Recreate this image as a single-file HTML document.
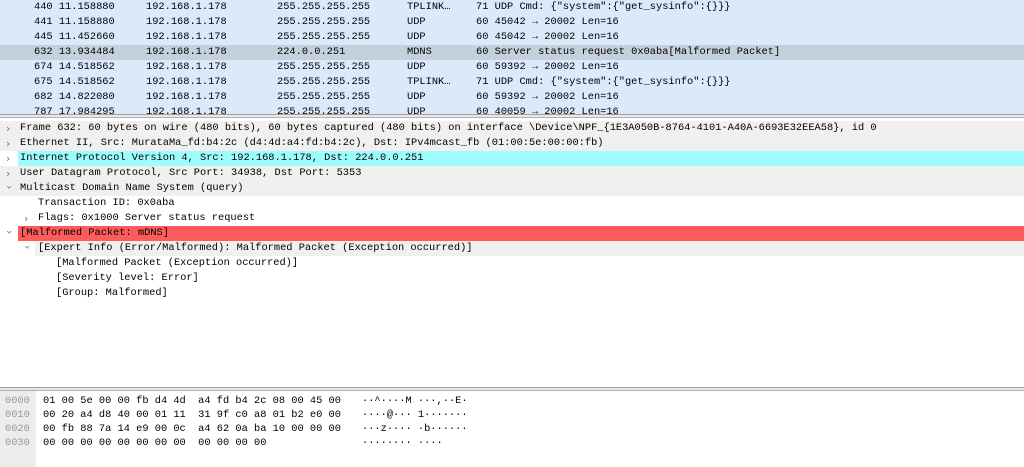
<!DOCTYPE html>
<html><head><meta charset="utf-8"><style>
*{margin:0;padding:0;box-sizing:border-box}
body{width:1024px;height:467px;overflow:hidden;background:#fff;font-family:"Liberation Mono","DejaVu Sans Mono",monospace;font-size:10.35px;color:#000;position:relative}
.r{position:absolute;left:0;width:1024px;height:15px;line-height:15px;white-space:pre}
.r span{position:absolute;top:0}
.pl{background:#daeafb}
.sel{background:#c4d0db}
.g{background:#f0f0f0}
.t{position:absolute;white-space:pre;line-height:15px}
.a{position:absolute;color:#777;font-size:11px;font-family:"DejaVu Sans",sans-serif}
</style></head><body>
<div style="position:absolute;top:0;left:0;width:1024px;height:114px;background:#daeafb;overflow:hidden">
<div class="r pl" style="top:0"><span style="left:34px">440 11.158880</span><span style="left:146px">192.168.1.178</span><span style="left:277px">255.255.255.255</span><span style="left:407px">TPLINK…</span><span style="left:476px">71 UDP Cmd: {"system":{"get_sysinfo":{}}}</span></div>
<div class="r pl" style="top:15px"><span style="left:34px">441 11.158880</span><span style="left:146px">192.168.1.178</span><span style="left:277px">255.255.255.255</span><span style="left:407px">UDP</span><span style="left:476px">60 45042 → 20002 Len=16</span></div>
<div class="r pl" style="top:30px"><span style="left:34px">445 11.452660</span><span style="left:146px">192.168.1.178</span><span style="left:277px">255.255.255.255</span><span style="left:407px">UDP</span><span style="left:476px">60 45042 → 20002 Len=16</span></div>
<div class="r sel" style="top:45px"><span style="left:34px">632 13.934484</span><span style="left:146px">192.168.1.178</span><span style="left:277px">224.0.0.251</span><span style="left:407px">MDNS</span><span style="left:476px">60 Server status request 0x0aba[Malformed Packet]</span></div>
<div class="r pl" style="top:60px"><span style="left:34px">674 14.518562</span><span style="left:146px">192.168.1.178</span><span style="left:277px">255.255.255.255</span><span style="left:407px">UDP</span><span style="left:476px">60 59392 → 20002 Len=16</span></div>
<div class="r pl" style="top:75px"><span style="left:34px">675 14.518562</span><span style="left:146px">192.168.1.178</span><span style="left:277px">255.255.255.255</span><span style="left:407px">TPLINK…</span><span style="left:476px">71 UDP Cmd: {"system":{"get_sysinfo":{}}}</span></div>
<div class="r pl" style="top:90px"><span style="left:34px">682 14.822080</span><span style="left:146px">192.168.1.178</span><span style="left:277px">255.255.255.255</span><span style="left:407px">UDP</span><span style="left:476px">60 59392 → 20002 Len=16</span></div>
<div class="r pl" style="top:105px"><span style="left:34px">787 17.984295</span><span style="left:146px">192.168.1.178</span><span style="left:277px">255.255.255.255</span><span style="left:407px">UDP</span><span style="left:476px">60 40059 → 20002 Len=16</span></div>
</div>
<div style="position:absolute;top:114px;left:0;width:1024px;height:1px;background:#a0a0a0"></div>
<div style="position:absolute;top:115px;left:0;width:1024px;height:2px;background:#e8e8e8"></div>
<div style="position:absolute;top:117px;left:0;width:1024px;height:1px;background:#b0b0b0"></div>

<div class="r g" style="top:121px"></div>
<div class="r g" style="top:136px"></div>
<div class="r" style="top:151px;left:18px;width:1006px;background:#9ffcfe"></div>
<div class="r g" style="top:166px"></div>
<div class="r g" style="top:181px"></div>
<div class="r" style="top:226px;left:18px;width:1006px;background:#fe5c5c"></div>
<div class="r g" style="top:241px;left:35px;width:989px"></div>

<div class="a" style="left:6px;top:121px;line-height:15px">›</div>
<div class="a" style="left:6px;top:136px;line-height:15px">›</div>
<div class="a" style="left:6px;top:151px;line-height:15px">›</div>
<div class="a" style="left:6px;top:166px;line-height:15px">›</div>
<div class="a" style="left:5px;top:181px;line-height:15px;transform:rotate(90deg);transform-origin:4px 8px">›</div>
<div class="a" style="left:24px;top:211px;line-height:15px">›</div>
<div class="a" style="left:5px;top:226px;line-height:15px;transform:rotate(90deg);transform-origin:4px 8px">›</div>
<div class="a" style="left:23px;top:241px;line-height:15px;transform:rotate(90deg);transform-origin:4px 8px">›</div>

<div class="t" style="left:20px;top:121px">Frame 632: 60 bytes on wire (480 bits), 60 bytes captured (480 bits) on interface \Device\NPF_{1E3A050B-8764-4101-A40A-6693E32EEA58}, id 0</div>
<div class="t" style="left:20px;top:136px">Ethernet II, Src: MurataMa_fd:b4:2c (d4:4d:a4:fd:b4:2c), Dst: IPv4mcast_fb (01:00:5e:00:00:fb)</div>
<div class="t" style="left:20px;top:151px">Internet Protocol Version 4, Src: 192.168.1.178, Dst: 224.0.0.251</div>
<div class="t" style="left:20px;top:166px">User Datagram Protocol, Src Port: 34938, Dst Port: 5353</div>
<div class="t" style="left:20px;top:181px">Multicast Domain Name System (query)</div>
<div class="t" style="left:38px;top:196px">Transaction ID: 0x0aba</div>
<div class="t" style="left:38px;top:211px">Flags: 0x1000 Server status request</div>
<div class="t" style="left:20px;top:226px">[Malformed Packet: mDNS]</div>
<div class="t" style="left:38px;top:241px">[Expert Info (Error/Malformed): Malformed Packet (Exception occurred)]</div>
<div class="t" style="left:56px;top:256px">[Malformed Packet (Exception occurred)]</div>
<div class="t" style="left:56px;top:271px">[Severity level: Error]</div>
<div class="t" style="left:56px;top:286px">[Group: Malformed]</div>

<div style="position:absolute;top:387px;left:0;width:1024px;height:1px;background:#a0a0a0"></div>
<div style="position:absolute;top:388px;left:0;width:1024px;height:2px;background:#e8e8e8"></div>
<div style="position:absolute;top:390px;left:0;width:1024px;height:1px;background:#b0b0b0"></div>
<div style="position:absolute;top:391px;left:0;width:36px;height:76px;background:#ececec"></div>
<div class="t" style="left:5px;top:394px;line-height:14px;color:#999">0000
0010
0020
0030</div>
<div class="t" style="left:43px;top:394px;line-height:14px">01 00 5e 00 00 fb d4 4d  a4 fd b4 2c 08 00 45 00
00 20 a4 d8 40 00 01 11  31 9f c0 a8 01 b2 e0 00
00 fb 88 7a 14 e9 00 0c  a4 62 0a ba 10 00 00 00
00 00 00 00 00 00 00 00  00 00 00 00</div>
<div class="t" style="left:362px;top:394px;line-height:14px">··^····M ···,··E·
····@··· 1·······
···z···· ·b······
········ ····</div>
</body></html>
